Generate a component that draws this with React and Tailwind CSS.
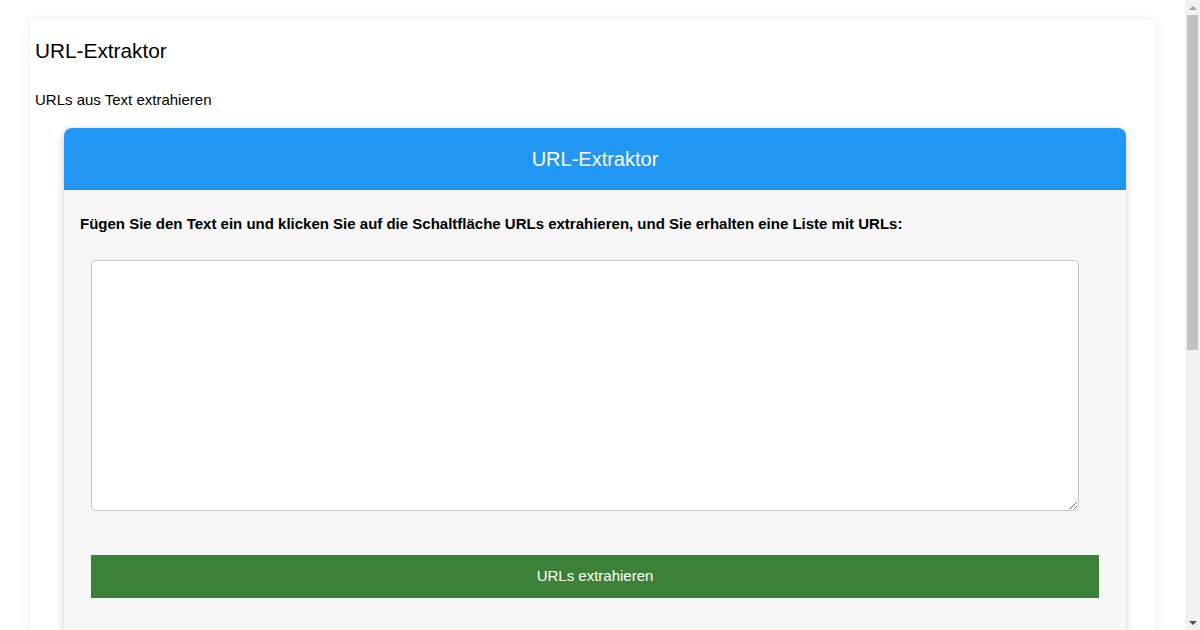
import React, { useState } from "react";

// mimics the classic browser scrollbar seen in the screenshot
const ScrollBar = () => (
  <div className="fixed top-0 right-0 w-[15px] h-screen bg-[#f1f1f1] flex flex-col items-center">
    <div className="h-[15px] w-full flex items-center justify-center">
      <div className="w-0 h-0 border-l-[4px] border-r-[4px] border-b-[4px] border-l-transparent border-r-transparent border-b-[#a3a3a3]" />
    </div>
    <div className="w-[11px] h-[335px] bg-[#c1c1c1]" />
    <div className="flex-1" />
    <div className="h-[15px] w-full flex items-center justify-center">
      <div className="w-0 h-0 border-l-[4px] border-r-[4px] border-t-[4px] border-l-transparent border-r-transparent border-t-[#505050]" />
    </div>
  </div>
);

const App = () => {
  const [text, setText] = useState("");

  return (
    <div className="min-h-screen bg-white font-['Liberation_Sans',Arial,sans-serif] text-black pt-[20px] pb-[40px] pr-[15px]">
      <div className="mx-[30px] bg-white shadow-[0_0_10px_rgba(0,0,0,0.08)] pl-[5px] pb-[30px]">
        <h1 className="pt-[19px] text-[20.8px] leading-[24px] font-normal">
          URL-Extraktor
        </h1>
        <p className="mt-[28px] text-[15px] leading-[18px]">
          URLs aus Text extrahieren
        </p>

        <div className="mt-[19px] mx-[29px] rounded-lg overflow-hidden bg-[#f6f6f6] shadow-[0_2px_8px_rgba(0,0,0,0.2)]">
          <div className="h-[62px] bg-[#2196f3] flex items-center justify-center text-white text-[20px]">
            URL-Extraktor
          </div>
          <div className="pt-[25px] pb-[60px]">
            <p className="px-[16px] text-[15px] leading-[18px] font-bold">
              Fügen Sie den Text ein und klicken Sie auf die Schaltfläche URLs
              extrahieren, und Sie erhalten eine Liste mit URLs:
            </p>
            <div className="mx-[27px] mt-[27px]">
              <textarea
                value={text}
                onChange={(e) => setText(e.target.value)}
                className="block w-[98%] h-[251px] bg-white border border-[#c8c8c8] rounded-[4px] p-2 text-[15px] outline-none"
              />
              <button className="mt-[44px] w-full h-[43px] bg-[#3b8238] text-white text-[15px] flex items-center justify-center">
                URLs extrahieren
              </button>
            </div>
          </div>
        </div>
      </div>
      <ScrollBar />
    </div>
  );
};

export default App;
